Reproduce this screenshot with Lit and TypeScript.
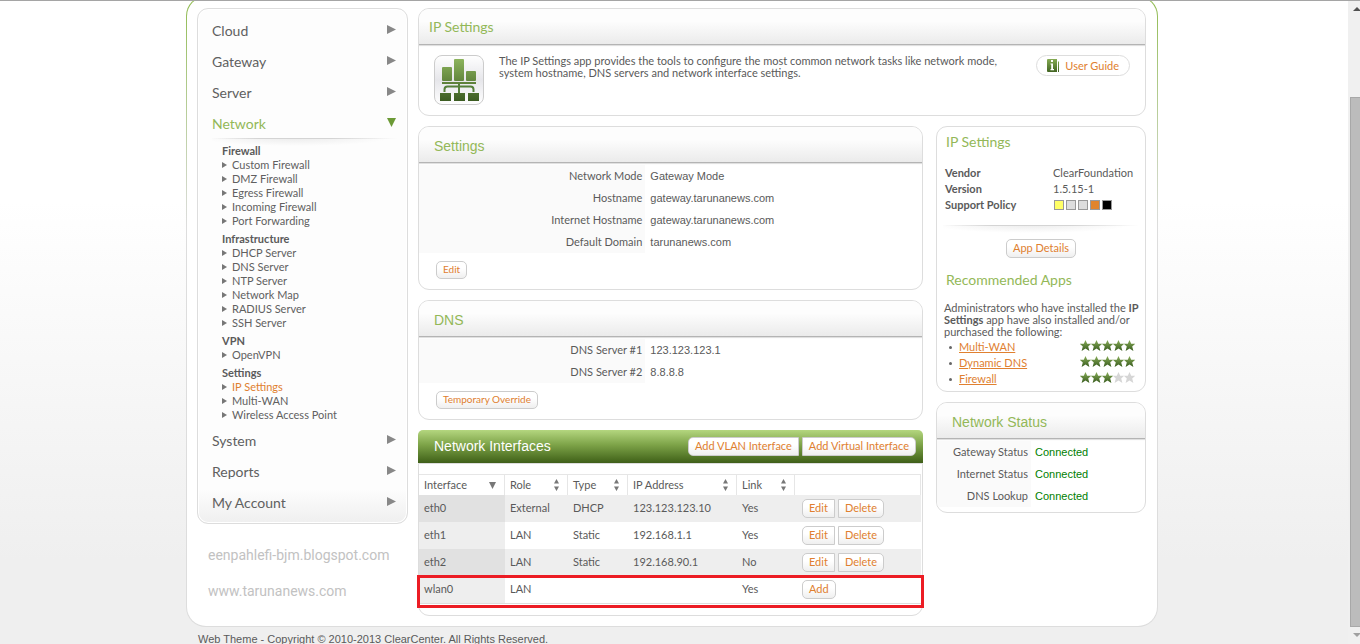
import { LitElement, html, svg, css, nothing } from "lit";
import { customElement, property } from "lit/decorators.js";
import { classMap } from "lit/directives/class-map.js";

const shared = css`
  * { box-sizing: border-box; }
  h1, h2, p, ul, dl, dd { margin: 0; padding: 0; font-weight: normal; }
  ul { list-style: none; }
  a { color: #e08030; }
  button {
    margin: 0; height: 19px; padding: 0 6px 2px; border: 1px solid #ccc; border-radius: 5px;
    background: linear-gradient(#fff 40%, #efefef); color: #e08030;
    font: 11px/15px Lato, sans-serif; white-space: nowrap; cursor: pointer;
  }
  button.small { height: 18px; font-size: 10px; line-height: 14px; }
  .pair { display: inline-flex; gap: 3px; vertical-align: middle; }
  .pair button:first-child:not(:last-child) { border-radius: 5px 0 0 5px; }
  .pair button:last-child:not(:first-child) { border-radius: 0 5px 5px 0; }
  .rule {
    height: 8px; border: 0; margin: 0;
    background:
      linear-gradient(90deg, transparent, #d4d4d4 25%, #d4d4d4 65%, transparent) top / 100% 1px no-repeat,
      radial-gradient(50% 100% at 45% 0, #ececec, transparent);
  }
`;

interface Group { title: string; items: string[]; }
interface Section { name: string; groups?: Group[]; }

const MENU: Section[] = [
  { name: "Cloud" },
  { name: "Gateway" },
  { name: "Server" },
  {
    name: "Network",
    groups: [
      { title: "Firewall", items: ["Custom Firewall", "DMZ Firewall", "Egress Firewall", "Incoming Firewall", "Port Forwarding"] },
      { title: "Infrastructure", items: ["DHCP Server", "DNS Server", "NTP Server", "Network Map", "RADIUS Server", "SSH Server"] },
      { title: "VPN", items: ["OpenVPN"] },
      { title: "Settings", items: ["IP Settings", "Multi-WAN", "Wireless Access Point"] },
    ],
  },
  { name: "System" },
  { name: "Reports" },
  { name: "My Account" },
];

@customElement("side-menu")
class SideMenu extends LitElement {
  static styles = [shared, css`
    :host { display: block; }
    nav {
      padding: 7px 10px 4px 14px; border: 1px solid #ddd; border-radius: 11px;
      background: linear-gradient(#fdfdfd calc(100% - 34px), #efefef);
      box-shadow: inset 0 0 0 1px #fff;
    }
    button.section {
      display: flex; align-items: center; justify-content: space-between; width: 100%; height: 31px;
      padding: 0 1px 2px 0; border: 0; background: none; color: #606060; font-size: 14px;
    }
    button.open { color: #93b858; }
    button svg { display: block; margin-bottom: 2px; }
    .sub { position: relative; padding: 0 0 4px 10px; }
    .sub .rule { position: absolute; top: -2px; left: 0; right: 0; }
    .title { padding-top: 4px; line-height: 14px; font-weight: bold; }
    li { display: flex; align-items: center; gap: 5px; height: 14px; }
    li::before { content: ""; border: solid transparent; border-width: 3px 0 3px 5px; border-left-color: #777; margin-bottom: 1px; }
    a { color: #606060; text-decoration: none; line-height: 14px; }
    a.current { color: #e08030; }
  `];

  render() {
    return html`<nav>${MENU.map((s) => html`
      <button class=${classMap({ section: true, open: !!s.groups })} aria-expanded=${s.groups ? "true" : "false"}>
        ${s.name}
        ${s.groups
          ? html`<svg width="9" height="9"><path d="M0 0h9L4.5 9z" fill="#6c9a36"/></svg>`
          : html`<svg width="9" height="9"><path d="M0 0v9l9-4.500z" fill="#888"/></svg>`}
      </button>
      ${s.groups ? html`<div class="sub"><hr class="rule">${s.groups.map((g) => html`
        <div class="title">${g.title}</div>
        <ul>${g.items.map((i) => html`<li><a href="#" class=${classMap({ current: i === "IP Settings" })}>${i}</a></li>`)}</ul>`)}
      </div>` : nothing}`)}</nav>`;
  }
}

@customElement("info-card")
class InfoCard extends LitElement {
  @property() heading = "";
  @property({ type: Boolean, reflect: true }) app = false;
  static styles = [shared, css`
    :host { display: block; border: 1px solid #ddd; border-radius: 11px; background: #fff; overflow: hidden; }
    h2 {
      height: 36px; padding: 1px 15px 0; border-bottom: 1px solid #b4b4b4;
      background: linear-gradient(#fdfdfd 35%, #ebebeb); color: #93b858;
      font: 14px/37px "Liberation Sans", sans-serif;
    }
    :host([app]) h2 { padding: 0 10px; font-family: Lato, sans-serif; line-height: 35px; }
    .body { box-shadow: inset 0 2px 1px -1px #ddd; }
  `];
  render() {
    return html`<h2>${this.heading}</h2><div class="body"><slot></slot></div>`;
  }
}

const STAR = "M5.500 0 7.200 3.800H11.200L8.200 6.600 9.400 11 5.500 8.600 1.600 11 2.800 6.600 -.2 3.800H3.800z";

@customElement("star-rating")
class StarRating extends LitElement {
  @property({ type: Number }) value = 0;
  static styles = css`:host { display: block; } svg { display: block; }`;
  render() {
    return html`<svg width="55" height="11" role="img" aria-label="${this.value} / 5">
      <defs><linearGradient id="g" x2="0" y2="1"><stop stop-color="#8aae5a"/><stop offset="1" stop-color="#365a1c"/></linearGradient></defs>
      ${[0, 1, 2, 3, 4].map((i) => svg`<path d=${STAR} transform="translate(${i * 11})" fill=${i < this.value ? "url(#g)" : "#d6d6d6"} />`)}
    </svg>`;
  }
}

const SETTINGS = [
  ["Network Mode", "Gateway Mode"],
  ["Hostname", "gateway.tarunanews.com"],
  ["Internet Hostname", "gateway.tarunanews.com"],
  ["Default Domain", "tarunanews.com"],
];
const DNS = [["DNS Server #1", "123.123.123.1"], ["DNS Server #2", "8.8.8.8"]];
const STATUS = [["Gateway Status", "Connected"], ["Internet Status", "Connected"], ["DNS Lookup", "Connected"]];
const COLUMNS = ["Interface", "Role", "Type", "IP Address", "Link"];
const INTERFACES = [
  { cells: ["eth0", "External", "DHCP", "123.123.123.10", "Yes"], actions: ["Edit", "Delete"] },
  { cells: ["eth1", "LAN", "Static", "192.168.1.1", "Yes"], actions: ["Edit", "Delete"] },
  { cells: ["eth2", "LAN", "Static", "192.168.90.1", "No"], actions: ["Edit", "Delete"] },
  { cells: ["wlan0", "LAN", "", "", "Yes"], actions: ["Add"], marked: true },
];
const RECOMMENDED: [string, number][] = [["Multi-WAN", 5], ["Dynamic DNS", 5], ["Firewall", 3]];

@customElement("app-root")
class AppRoot extends LitElement {
  static styles = [shared, css`
    :host {
      display: flex; height: 100vh; overflow: hidden; border-top: 1px solid #a5a5a5; box-sizing: border-box;
      background: linear-gradient(#fff 200px, #efefef 560px);
      color: #5a5a5a; font: 11px/12px Lato, sans-serif;
    }
    .viewport { flex: 1; min-width: 0; overflow: hidden; padding-right: 4px; }
    .shell { max-width: 972px; margin: -5px auto 0; }
    .frame {
      display: flex; align-items: flex-start; gap: 10px; padding: 11px 11px 10px 10px;
      border: 1px solid transparent; border-radius: 20px;
      background:
        linear-gradient(#fff, #fff) padding-box,
        linear-gradient(#8fbb4e, #a9c77f 70px, #ddd 230px) border-box;
    }
    aside { flex: 0 0 211px; }
    .watermark { padding: 13px 11px 0; color: #c2c2c2; font: 14px/36px Roboto, sans-serif; }
    main { flex: 1; min-width: 0; display: flex; flex-direction: column; gap: 10px; }
    .columns { display: flex; align-items: flex-start; gap: 13px; }
    .left { flex: 1; min-width: 0; display: flex; flex-direction: column; gap: 10px; }
    .right { flex: 0 0 210px; display: flex; flex-direction: column; gap: 10px; }

    .intro { display: flex; align-items: flex-start; gap: 15px; padding: 10px 15px; }
    .intro p { flex: 1; max-width: 520px; }
    .appicon { flex: none; display: block; }
    .guide {
      display: flex; align-items: center; gap: 6px; height: 21px; margin-left: auto;
      padding: 0 10px 1px; border-color: #ddd; border-radius: 11px; background: #fff;
    }

    .fields { display: grid; grid-template-columns: 45% 1fr; padding-top: 2px; line-height: 22px; }
    .fields dt { padding-right: 3px; background: #fafafa; text-align: right; }
    .fields dd { padding-left: 5px; font-family: "Liberation Sans", sans-serif; }
    .fields.status { grid-template-columns: 94px 1fr; padding-bottom: 5px; }
    .status dd { padding-left: 4px; color: #008000; }
    .foot { display: flex; padding: 8px 17px 10px; }

    .bar {
      display: flex; align-items: center; height: 33px; padding: 0 7px 0 16px; border-radius: 5px 5px 0 0;
      background: linear-gradient(#b4d67f, #7da348 45%, #4a6c20 90%, #3f5e1a); color: #fff;
    }
    .bar h2 { flex: 1; font: 14px/33px "Liberation Sans", sans-serif; }
    .tablebox { padding: 10px 1px 11px 0; border: 1px solid #ddd; border-radius: 0 0 11px 11px; background: #fff; }
    table { width: 100%; border-collapse: separate; border-spacing: 0; table-layout: fixed; border-bottom: 1px solid #ddd; }
    th, td { padding: 0 5px; text-align: left; font-weight: normal; white-space: nowrap; }
    th { height: 21px; border-top: 1px solid #e6e6e6; border-right: 1px solid #e6e6e6; }
    td { height: 27px; padding-bottom: 2px; }
    td:last-child { padding: 0 7px; }
    .c0 { width: 86px; } .c1 { width: 63px; } .c2 { width: 60px; } .c3 { width: 109px; } .c4 { width: 58px; }
    .head { display: flex; align-items: center; justify-content: space-between; padding-right: 3px; }
    tbody tr:nth-child(odd) { background: #eee; }
    tbody td:first-child { background: #eee; }
    tbody tr:nth-child(odd) td:first-child { background: #e1e1e1; }
    tr.marked { position: relative; }
    tr.marked td:last-child::after {
      content: ""; position: absolute; top: -1px; right: -3px; bottom: -5px; left: -2px;
      border: 3px solid #ec1c24; pointer-events: none;
    }

    .about { padding: 6px 6px 4px; border: 1px solid #ddd; border-radius: 11px; background: #fff; }
    .about h2 { padding-left: 3px; color: #93b858; font-size: 14px; line-height: 18px; }
    .about dl { display: grid; grid-template-columns: 108px 1fr; margin: 14px 0 12px; padding-left: 2px; line-height: 16px; }
    .about dt { font-weight: bold; }
    .policy { display: flex; align-items: center; gap: 2px; padding-left: 1px; }
    .policy i { width: 10px; height: 10px; border: 1px solid #999; }
    .yellow { background: #ff6; } .grey { background: #ddd; } .orange { background: #e0842c; } .black { background: #000; }
    .details { display: flex; justify-content: center; padding: 6px 0 13px; }
    .about p { padding: 13px 0 1px 1px; }
    .about li { display: flex; align-items: center; height: 16px; padding: 0 4px 0 6px; }
    .about li::before { content: ""; width: 3px; height: 3px; margin-right: 7px; border-radius: 2px; background: #666; }
    .about li a { flex: 1; }
    .about star-rating { margin-bottom: 3px; }

    footer { padding: 6px 12px 0; font-family: "Liberation Sans", sans-serif; }
    .scrollbar { flex: 0 0 12px; display: flex; flex-direction: column; align-items: stretch; background: #f0f0f0; overflow: hidden; }
    .scrollbar svg { display: block; margin-left: 5px; }
    .track { flex: 1; padding: 80px 0 0 2px; display: flex; }
    .thumb { flex: 1; border: 1px solid #a8a8a8; border-right: 0; background: #bcbcbc; }
  `];

  private fields(rows: string[][], extra = "") {
    return html`<dl class="fields ${extra}">${rows.map(([k, v]) => html`<dt>${k}</dt><dd>${v}</dd>`)}</dl>`;
  }

  private sortIcon(i: number) {
    return i === 0
      ? html`<svg width="7" height="7"><path d="M0 0h7L3.500 7z" fill="#777"/></svg>`
      : html`<svg width="5" height="12"><path d="M0 4.500h5L2.500 0zM0 7.500h5L2.500 12z" fill="#777"/></svg>`;
  }

  render() {
    return html`
      <div class="viewport"><div class="shell">
        <div class="frame">
          <aside>
            <side-menu></side-menu>
            <div class="watermark"><div>eenpahlefi-bjm.blogspot.com</div><div>www.tarunanews.com</div></div>
          </aside>
          <main>
            <info-card app heading="IP Settings"><div class="intro">
              <svg class="appicon" width="50" height="50" viewBox="0 0 50 50">
                <defs>
                  <linearGradient id="bg" x2="0" y2="1"><stop stop-color="#fff"/><stop offset=".5" stop-color="#e6e6ea"/><stop offset="1" stop-color="#fff"/></linearGradient>
                  <linearGradient id="gr" gradientUnits="userSpaceOnUse" x1="0" y1="4" x2="0" y2="46"><stop stop-color="#8cb45c"/><stop offset="1" stop-color="#3c5c22"/></linearGradient>
                </defs>
                <rect x=".5" y=".5" width="49" height="49" rx="7.500" fill="url(#bg)" stroke="#ccc"/>
                <g fill="url(#gr)">
                  <rect x="8" y="12" width="10" height="14" rx="1"/><rect x="20" y="4" width="10" height="22" rx="1"/><rect x="32" y="16" width="10" height="10" rx="1"/>
                  <rect x="8" y="27" width="34" height="2"/>
                  <rect x="6" y="38" width="11" height="8"/><rect x="20" y="38" width="11" height="8"/><rect x="34" y="38" width="11" height="8"/>
                </g>
                <path d="M25 29v9M10.500 37v-2.500q0-3 3-3h23q3 0 3 3V37" fill="none" stroke="#55803a" stroke-width="2"/>
              </svg>
              <p>The IP Settings app provides the tools to configure the most common network tasks like network mode, system hostname, DNS servers and network interface settings.</p>
              <button class="guide">
                <svg width="12" height="13" viewBox="0 0 12 13">
                  <defs><linearGradient id="bk" x2="0" y2="1"><stop stop-color="#86ac54"/><stop offset="1" stop-color="#426422"/></linearGradient></defs>
                  <path d="M1 0h9v13H1q-1 0-1-1V1q0-1 1-1zM11 2.500h1v10.500h-1z" fill="url(#bk)"/>
                  <path d="M4 1h2v2H4zM3.500 4.500H6V10h1v1.200H3.500V10h.7V5.600h-.7z" fill="#fff"/>
                </svg>User Guide</button>
            </div></info-card>

            <div class="columns">
              <div class="left">
                <info-card heading="Settings">
                  ${this.fields(SETTINGS)}
                  <div class="foot"><button class="small">Edit</button></div>
                </info-card>
                <info-card heading="DNS">
                  ${this.fields(DNS)}
                  <div class="foot"><button class="small">Temporary Override</button></div>
                </info-card>
                <section>
                  <div class="bar"><h2>Network Interfaces</h2>
                    <div class="pair"><button>Add VLAN Interface</button><button>Add Virtual Interface</button></div>
                  </div>
                  <div class="tablebox"><table>
                    <thead><tr>
                      ${COLUMNS.map((c, i) => html`<th class="c${i}"><div class="head">${c}${this.sortIcon(i)}</div></th>`)}<th></th>
                    </tr></thead>
                    <tbody>${INTERFACES.map((r) => html`<tr class=${classMap({ marked: !!r.marked })}>
                      ${r.cells.map((c) => html`<td>${c}</td>`)}
                      <td><div class="pair">${r.actions.map((a) => html`<button>${a}</button>`)}</div></td>
                    </tr>`)}</tbody>
                  </table></div>
                </section>
              </div>

              <div class="right">
                <section class="about">
                  <h2>IP Settings</h2>
                  <dl>
                    <dt>Vendor</dt><dd>ClearFoundation</dd>
                    <dt>Version</dt><dd>1.5.15-1</dd>
                    <dt>Support Policy</dt>
                    <dd class="policy"><i class="yellow"></i><i class="grey"></i><i class="grey"></i><i class="orange"></i><i class="black"></i></dd>
                  </dl>
                  <hr class="rule">
                  <div class="details"><button>App Details</button></div>
                  <h2>Recommended Apps</h2>
                  <p>Administrators who have installed the <b>IP</b> <b>Settings</b> app have also installed and/or purchased the following:</p>
                  <ul>${RECOMMENDED.map(([n, v]) => html`<li><a href="#">${n}</a><star-rating .value=${v}></star-rating></li>`)}</ul>
                </section>
                <info-card heading="Network Status">${this.fields(STATUS, "status")}</info-card>
              </div>
            </div>
          </main>
        </div>
        <footer>Web Theme - Copyright © 2010-2013 ClearCenter. All Rights Reserved.</footer>
      </div></div>
      <div class="scrollbar" aria-hidden="true">
        <svg width="8" height="16"><path d="M0 10l4-4 4 4z" fill="#505050"/></svg>
        <div class="track"><div class="thumb"></div></div>
        <svg width="8" height="17"><path d="M0 6h8l-4 4z" fill="#a0a0a0"/></svg>
      </div>`;
  }
}
